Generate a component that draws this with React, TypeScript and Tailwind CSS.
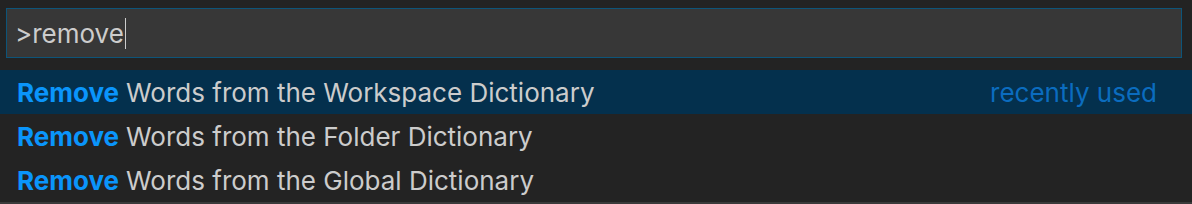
import React from 'react';

const items = [
  { rest: 'Words from the Workspace Dictionary', note: 'recently used' },
  { rest: 'Words from the Folder Dictionary' },
  { rest: 'Words from the Global Dictionary' },
];

export default function App() {
  return (
    <div
      className="w-[1192px] h-[204px] bg-[#232323] overflow-hidden flex flex-col"
      style={{ fontFamily: 'Inter, "Liberation Sans", Arial, sans-serif' }}
    >
      <div className="pt-[8px] px-[6px] pr-[10px] pb-[12px]">
        <div className="h-[50px] border border-[#0d5479] bg-[#373737] flex items-center pl-[8px] text-[26px] text-[#cccccc]">
          <span>&gt;remove</span>
          <span className="w-px h-[31px] bg-[#cccccc] ml-[1px]" />
        </div>
      </div>
      {items.map((item, i) => (
        <div
          key={i}
          className={`h-[44px] shrink-0 flex items-center pl-[17px] pr-[35px] text-[26px] ${
            i === 0 ? 'bg-[#04304d]' : ''
          }`}
        >
          <span className="font-bold text-[#0a95fb]">Remove</span>
          <span className="text-[#cccccc] ml-[7px]">{item.rest}</span>
          {item.note && <span className="ml-auto text-[#0b6cbf]">{item.note}</span>}
        </div>
      ))}
      <div className="h-[2px] bg-[#3a3a3a]" />
    </div>
  );
}
